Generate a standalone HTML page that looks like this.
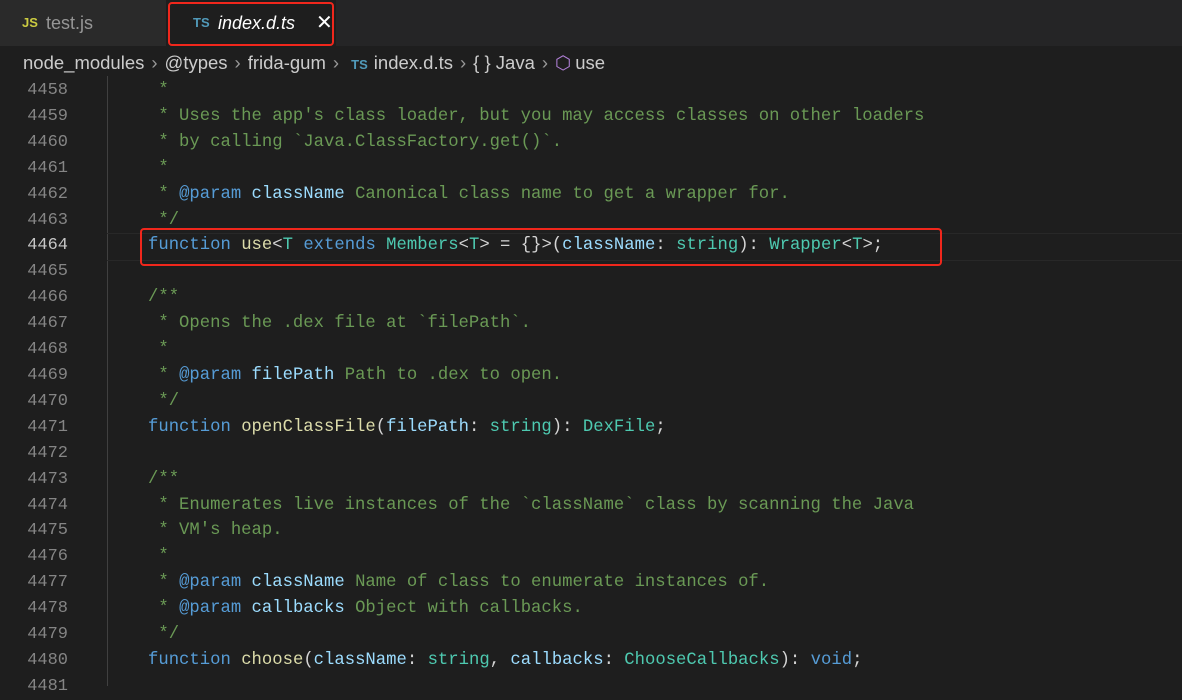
<!DOCTYPE html>
<html><head><meta charset="utf-8"><style>
body{margin:0;width:1182px;height:686px;overflow:hidden;background:#1e1e1e;font-family:"Liberation Sans",sans-serif}
.tabs{position:absolute;left:0;top:0;width:1182px;height:46px;background:#252526}
.tab{position:absolute;top:0;height:46px;line-height:46px;font-size:18px;color:#969696}
.tab1{left:0;width:166px;background:#2a2a2a}
.tab2{left:166px;width:170px;background:#1e1e1e;color:#fff}
.red{position:absolute;border:2.5px solid #f0271c;border-radius:4px}
.bc{position:absolute;top:46px;left:0;width:1182px;height:32px;line-height:34px;font-size:18.5px;color:#cccccc;background:#1e1e1e}
.bc .s{color:#999;margin:0 7px}
.ed{position:absolute;top:78px;left:0;width:1182px}
.ln{position:absolute;left:0;width:68px;text-align:right;font:17px/25.9px "Liberation Mono",monospace;color:#858585}
.code{position:absolute;left:148px;font:17.25px/25.9px "Liberation Mono",monospace;color:#d4d4d4;white-space:pre}
.k{color:#569cd6}.f{color:#dcdcaa}.t{color:#4ec9b0}.p{color:#9cdcfe}.c{color:#6a9955}
.guide{position:absolute;left:107px;top:76px;width:1px;height:610px;background:#404040}
</style></head><body>
<div class="tabs">
<div class="tab tab1"><span style="position:absolute;left:22px;color:#cbcb41;font-size:13px;font-weight:bold">JS</span><span style="position:absolute;left:46px">test.js</span></div>
<div class="tab tab2"><span style="position:absolute;left:27px;color:#519aba;font-size:13px;font-weight:bold">TS</span><span style="position:absolute;left:52px;font-style:italic">index.d.ts</span><span style="position:absolute;left:150px;font-size:20px">✕</span></div>
</div>
<div class="red" style="left:168px;top:2px;width:162px;height:40px"></div>
<div class="bc"><span style="position:absolute;left:23px">node_modules<span class="s">›</span>@types<span class="s">›</span>frida-gum<span class="s">›</span> <span style="color:#519aba;font-size:13px;font-weight:bold;margin-right:6px">TS</span>index.d.ts<span class="s">›</span>{ } Java<span class="s">›</span><span style="color:#b180d7;margin-right:4px">⬡</span>use</span></div>
<div class="guide"></div>
<div style="position:absolute;left:107px;top:233px;width:1075px;height:26px;border-top:1px solid #282828;border-bottom:1px solid #282828"></div>
<div class="ed">
<div class="ln">4458<br>4459<br>4460<br>4461<br>4462<br>4463<br><span style="color:#c6c6c6">4464</span><br>4465<br>4466<br>4467<br>4468<br>4469<br>4470<br>4471<br>4472<br>4473<br>4474<br>4475<br>4476<br>4477<br>4478<br>4479<br>4480<br>4481</div>
<div class="code"><span class="c"> *
 * Uses the app's class loader, but you may access classes on other loaders
 * by calling `Java.ClassFactory.get()`.
 *
 * <span class="k">@param</span> <span class="p">className</span> Canonical class name to get a wrapper for.
 */</span>
<span class="k">function</span> <span class="f">use</span>&lt;<span class="t">T</span> <span class="k">extends</span> <span class="t">Members</span>&lt;<span class="t">T</span>&gt; = {}&gt;(<span class="p">className</span>: <span class="t">string</span>): <span class="t">Wrapper</span>&lt;<span class="t">T</span>&gt;;

<span class="c">/**
 * Opens the .dex file at `filePath`.
 *
 * <span class="k">@param</span> <span class="p">filePath</span> Path to .dex to open.
 */</span>
<span class="k">function</span> <span class="f">openClassFile</span>(<span class="p">filePath</span>: <span class="t">string</span>): <span class="t">DexFile</span>;

<span class="c">/**
 * Enumerates live instances of the `className` class by scanning the Java
 * VM's heap.
 *
 * <span class="k">@param</span> <span class="p">className</span> Name of class to enumerate instances of.
 * <span class="k">@param</span> <span class="p">callbacks</span> Object with callbacks.
 */</span>
<span class="k">function</span> <span class="f">choose</span>(<span class="p">className</span>: <span class="t">string</span>, <span class="p">callbacks</span>: <span class="t">ChooseCallbacks</span>): <span class="k">void</span>;
</div>
</div>
<div class="red" style="left:140px;top:228px;width:798px;height:34px"></div>
</body></html>
